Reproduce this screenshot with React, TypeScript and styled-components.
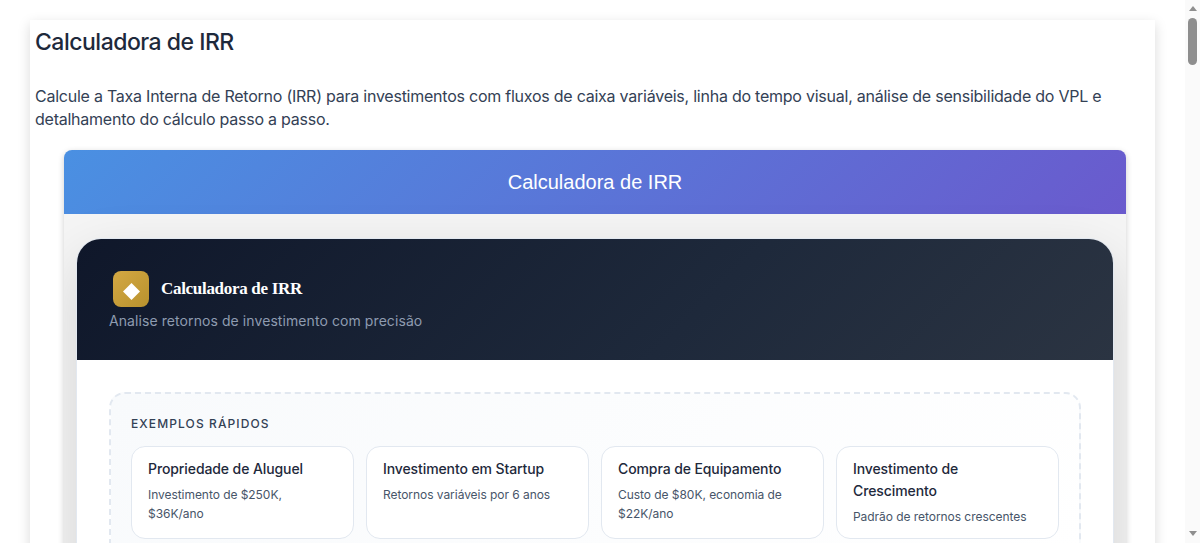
import React from 'react';
import styled, { createGlobalStyle } from 'styled-components';

const GlobalStyle = createGlobalStyle`
  html, body {
    margin: 0;
    padding: 0;
    background: #fff;
  }
  * {
    box-sizing: border-box;
  }
`;

const Shell = styled.div`
  display: flex;
  height: 100vh;
  overflow: hidden;
`;

const Content = styled.div`
  flex: 1;
  min-width: 0;
  overflow: hidden;
`;

const ScrollTrack = styled.div`
  flex: 0 0 15px;
  display: flex;
  flex-direction: column;
  align-items: center;
  padding: 6px 0 7px;
  background: #fafafa;
`;

const ArrowUp = styled.div`
  width: 0;
  height: 0;
  border-left: 4.5px solid transparent;
  border-right: 4.5px solid transparent;
  border-bottom: 5px solid #8e8e8e;
`;

const ArrowDown = styled.div`
  width: 0;
  height: 0;
  margin-top: auto;
  border-left: 4.5px solid transparent;
  border-right: 4.5px solid transparent;
  border-top: 5px solid #8e8e8e;
`;

const Thumb = styled.div`
  width: 9px;
  height: 47px;
  margin-top: 7px;
  border-radius: 4.5px;
  background: #8e8e8e;
`;

const Article = styled.main`
  margin: 20px 30px;
  padding: 0 5px 40px;
  background: #fff;
  box-shadow: 0 4px 12px rgba(0, 0, 0, 0.15);
  font-family: Inter, "Open Sans", sans-serif;
  color: #1e293b;
`;

const PageTitle = styled.h1`
  margin: 0;
  padding-top: 5px;
  font-size: 23px;
  line-height: 34px;
  font-weight: 550;
  letter-spacing: -0.5px;
`;

const Intro = styled.p`
  margin: 26px 0 0;
  font-size: 16px;
  line-height: 23px;
  color: #334155;
  letter-spacing: -0.24px;
`;

const Widget = styled.section`
  margin: 19px 0 0 29px;
  width: 1062px;
  border-radius: 8px;
  background: #f5f5f5;
  box-shadow: 0 2px 6px rgba(0, 0, 0, 0.2);
  overflow: hidden;
`;

const WidgetHeader = styled.header`
  height: 64px;
  display: flex;
  align-items: center;
  justify-content: center;
  background: linear-gradient(135deg, #4a90e2, #6a5acd);
  color: #fff;
  font-family: "Liberation Sans", Arial, sans-serif;
  font-size: 20px;
`;

const WidgetBody = styled.div`
  padding: 25px 13px 60px;
  background: #f5f5f5;
`;

const Calculator = styled.div`
  border-radius: 24px;
  background: #fff;
  box-shadow: 0 0 0 1px #e2e8f0, 0 20px 60px rgba(0, 0, 0, 0.14);
  overflow: hidden;
`;

const DarkHeader = styled.div`
  height: 121px;
  padding: 32px;
  background: linear-gradient(135deg, #0f172a, #1e293b 60%, #2b3442);
`;

const BrandRow = styled.div`
  display: flex;
  align-items: center;
  gap: 12px;
  margin-left: 4px;
`;

const BrandIcon = styled.div`
  width: 36px;
  height: 36px;
  padding-top: 5px;
  border-radius: 8px;
  display: flex;
  align-items: center;
  justify-content: center;
  background: linear-gradient(135deg, #d4a843, #b8922e);
`;

const BrandTitle = styled.h2`
  margin: 0;
  font-family: "Liberation Serif", "DejaVu Serif", serif;
  font-size: 17px;
  font-weight: 700;
  letter-spacing: -0.3px;
  color: #fff;
`;

const Tagline = styled.p`
  margin: 4px 0 0;
  font-size: 14px;
  line-height: 20px;
  letter-spacing: 0.08px;
  color: #8e9bb0;
`;

const CalcBody = styled.div`
  padding: 32px 32px 40px;
`;

const Examples = styled.div`
  padding: 20px;
  border: 2px dashed #e2e8f0;
  border-radius: 16px;
  background: linear-gradient(135deg, #f8fafc, #ffffff);
`;

const ExamplesLabel = styled.div`
  font-size: 12px;
  line-height: 20px;
  font-weight: 500;
  letter-spacing: 1.1px;
  color: #334155;
  margin-bottom: 12px;
`;

const ExampleGrid = styled.div`
  display: grid;
  grid-template-columns: repeat(4, 1fr);
  gap: 12px;
`;

const ExampleCard = styled.div`
  padding: 11px 16px 12px;
  background: #fff;
  border: 1px solid #e2e8f0;
  border-radius: 14px;
`;

const ExampleTitle = styled.div`
  font-size: 14px;
  line-height: 22px;
  font-weight: 550;
  letter-spacing: -0.1px;
  color: #1e293b;
`;

const ExampleText = styled.div`
  margin-top: 5px;
  font-size: 12px;
  line-height: 19px;
  letter-spacing: -0.05px;
  color: #475569;
`;

const examples = [
  { title: 'Propriedade de Aluguel', text: 'Investimento de $250K, $36K/ano' },
  { title: 'Investimento em Startup', text: 'Retornos variáveis por 6 anos' },
  { title: 'Compra de Equipamento', text: 'Custo de $80K, economia de $22K/ano' },
  { title: 'Investimento de Crescimento', text: 'Padrão de retornos crescentes' },
];

const App: React.FC = () => (
  <>
    <GlobalStyle />
    <Shell>
      <Content>
        <Article>
          <PageTitle>Calculadora de IRR</PageTitle>
          <Intro>
            Calcule a Taxa Interna de Retorno (IRR) para investimentos com fluxos de caixa variáveis,
            linha do tempo visual, análise de sensibilidade do VPL e detalhamento do cálculo passo a
            passo.
          </Intro>
          <Widget>
            <WidgetHeader>Calculadora de IRR</WidgetHeader>
            <WidgetBody>
              <Calculator>
                <DarkHeader>
                  <BrandRow>
                    <BrandIcon>
                      <svg width="17" height="17" viewBox="0 0 17 17">
                        <path d="M8.5 0 L17 8.5 L8.5 17 L0 8.5 Z" fill="#fff" />
                      </svg>
                    </BrandIcon>
                    <BrandTitle>Calculadora de IRR</BrandTitle>
                  </BrandRow>
                  <Tagline>Analise retornos de investimento com precisão</Tagline>
                </DarkHeader>
                <CalcBody>
                  <Examples>
                    <ExamplesLabel>EXEMPLOS RÁPIDOS</ExamplesLabel>
                    <ExampleGrid>
                      {examples.map((item) => (
                        <ExampleCard key={item.title}>
                          <ExampleTitle>{item.title}</ExampleTitle>
                          <ExampleText>{item.text}</ExampleText>
                        </ExampleCard>
                      ))}
                    </ExampleGrid>
                  </Examples>
                </CalcBody>
              </Calculator>
            </WidgetBody>
          </Widget>
        </Article>
      </Content>
      <ScrollTrack>
        <ArrowUp />
        <Thumb />
        <ArrowDown />
      </ScrollTrack>
    </Shell>
  </>
);

export default App;
